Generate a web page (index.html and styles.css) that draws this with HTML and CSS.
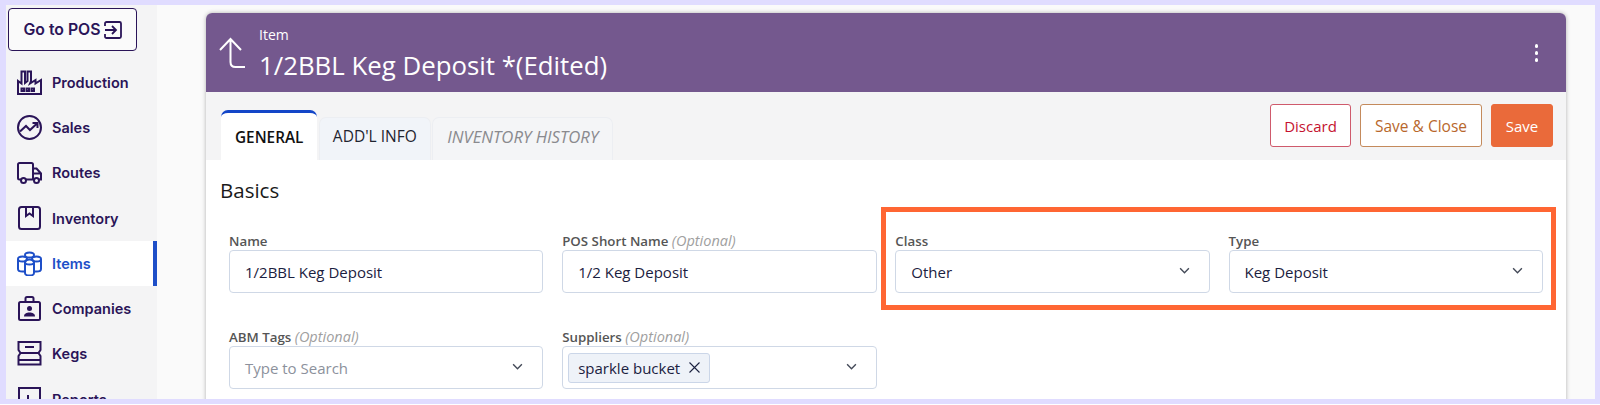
FILE: index.html
```html
<!DOCTYPE html>
<html lang="en">
<head>
  <meta charset="UTF-8">
  <title>Item - 1/2BBL Keg Deposit</title>
  <link rel="stylesheet" href="styles.css">
</head>
<body>
  <div class="frame">
    <aside class="sidebar">
      <button class="pos-button">Go to POS
        <svg class="pos-icon" viewBox="0 0 18 18"><path d="M1 5V2.500A1.500 1.500 0 0 1 2.500 1h13A1.500 1.500 0 0 1 17 2.500v13a1.500 1.500 0 0 1-1.500 1.500h-13A1.500 1.500 0 0 1 1 15.500V13M1 9h10.500M8 5l4 4-4 4"/></svg>
      </button>
      <nav class="nav">
        <a class="nav-item">
          <svg class="nav-icon" viewBox="0 0 25 25"><path d="M1 24V11l3.500 2.500V1.500h3.500V13l2.500-2V1.500H14V11l-1 2.500 5.500-3.500v3.500L24 10v14zM4.500 21v-2.500h2.500V21zM9.500 21v-2.500H12V21zM14.500 21v-2.500H17V21z"/></svg>
          Production
        </a>
        <a class="nav-item">
          <svg class="nav-icon" viewBox="0 0 25 25"><circle cx="12.500" cy="12.500" r="11.500"/><path d="M3 16.500l6-5.500 4 4 7-6.500M15.500 8h5v5"/></svg>
          Sales
        </a>
        <a class="nav-item">
          <svg class="nav-icon" viewBox="0 0 25 25"><path d="M4 19.500H2.500A1.500 1.500 0 0 1 1 18V4.500A1.500 1.500 0 0 1 2.500 3h12A1.500 1.500 0 0 1 16 4.500v15H9M16 8.500h3.500l4.500 5v6h-2M16 13.500h8"/><circle cx="6.500" cy="20.500" r="2.500"/><circle cx="19.500" cy="20.500" r="2.500"/></svg>
          Routes
        </a>
        <a class="nav-item">
          <svg class="nav-icon" viewBox="0 0 25 25"><rect x="2" y="1" width="21" height="22" rx="2.500"/><path d="M9 1v9l3.500-2.500L16 10V1"/></svg>
          Inventory
        </a>
        <a class="nav-item active">
          <svg class="nav-icon" viewBox="0 0 25 25"><ellipse cx="12.500" cy="4" rx="4.500" ry="2.500"/><ellipse cx="5.500" cy="8" rx="4.500" ry="2.500"/><ellipse cx="19.500" cy="8" rx="4.500" ry="2.500"/><ellipse cx="12.500" cy="11" rx="4.500" ry="2.500"/><path d="M1 8v10c0 1.500 2 2.500 4.500 2.500H8M24 8v10c0 1.500-2 2.500-4.500 2.500H17M8 11v11c0 1.500 2 2.500 4.500 2.500s4.500-1 4.500-2.500V11"/></svg>
          Items
        </a>
        <a class="nav-item">
          <svg class="nav-icon" viewBox="0 0 25 25"><rect x="2" y="6" width="21" height="18" rx="1.500"/><path d="M8.500 6V2.500A1.500 1.500 0 0 1 10 1h5a1.500 1.500 0 0 1 1.500 1.500V6"/><circle class="fill" cx="12.500" cy="12.500" r="2.500"/><path class="fill" d="M7 20.500c0-3 2.500-4 5.500-4s5.500 1 5.500 4z"/></svg>
          Companies
        </a>
        <a class="nav-item">
          <svg class="nav-icon" viewBox="0 0 25 25"><path d="M1.500 1h22v8l-2 3 2 3v8.500h-22V15l2-3-2-3zM3.500 12h18M1.500 19h22M8 6h9"/></svg>
          Kegs
        </a>
        <a class="nav-item">
          <svg class="nav-icon" viewBox="0 0 25 25"><rect x="2" y="1" width="21" height="23"/><path d="M11 8v8M14.500 12v4"/></svg>
          Reports
        </a>
      </nav>
    </aside>

    <main class="main">
      <section class="card">
        <header class="card-header">
          <svg class="back-icon" viewBox="0 0 26 32"><path d="M1 13L11.500 2 22 13M11.500 2v23c0 3 2 5 5 5H26"/></svg>
          <div class="card-titles">
            <div class="card-kicker">Item</div>
            <h1 class="card-title">1/2BBL Keg Deposit *(Edited)</h1>
          </div>
          <div class="kebab"><span></span><span></span><span></span></div>
        </header>

        <div class="toolbar">
          <div class="tabs">
            <div class="tab current">GENERAL</div>
            <div class="tab">ADD'L INFO</div>
            <div class="tab muted">INVENTORY HISTORY</div>
          </div>
          <div class="actions">
            <button class="btn btn-discard">Discard</button>
            <button class="btn btn-close">Save &amp; Close</button>
            <button class="btn btn-save">Save</button>
          </div>
        </div>

        <div class="card-body">
          <h2 class="section-title">Basics</h2>
          <div class="form-grid">
            <div class="field">
              <label class="field-label">Name</label>
              <input class="control" type="text" value="1/2BBL Keg Deposit">
            </div>
            <div class="field">
              <label class="field-label">POS Short Name <em>(Optional)</em></label>
              <input class="control" type="text" value="1/2 Keg Deposit">
            </div>
            <div class="field">
              <label class="field-label">Class</label>
              <div class="control select">Other
                <svg class="chevron" viewBox="0 0 12 8"><path d="M1 1.500l5 5 5-5"/></svg>
              </div>
            </div>
            <div class="field">
              <label class="field-label">Type</label>
              <div class="control select">Keg Deposit
                <svg class="chevron" viewBox="0 0 12 8"><path d="M1 1.500l5 5 5-5"/></svg>
              </div>
            </div>
            <div class="field">
              <label class="field-label">ABM Tags <em>(Optional)</em></label>
              <div class="control select placeholder">Type to Search
                <svg class="chevron" viewBox="0 0 12 8"><path d="M1 1.500l5 5 5-5"/></svg>
              </div>
            </div>
            <div class="field">
              <label class="field-label">Suppliers <em>(Optional)</em></label>
              <div class="control select has-chip">
                <span class="chip">sparkle bucket
                  <svg class="chip-x" viewBox="0 0 11 11"><path d="M.5.500l10 10M10.500.500l-10 10"/></svg>
                </span>
                <svg class="chevron" viewBox="0 0 12 8"><path d="M1 1.500l5 5 5-5"/></svg>
              </div>
            </div>
            <!-- annotation from the screenshot -->
            <div class="highlight"></div>
          </div>
        </div>
      </section>
    </main>
  </div>
</body>
</html>
```

FILE: styles.css
```css
* {
  box-sizing: border-box;
}
html, body {
  height: 405px;
  margin: 0;
  overflow: hidden;
  background: #fff;
}
body {
  font-family: 'Open Sans', sans-serif;
  color: #1b2140;
}
.frame {
  display: flex;
  height: 404px;
  border: solid #e0dcff;
  border-width: 5px 5px 5px 6px;
  overflow: hidden;
}

/* sidebar */
.sidebar {
  width: 151px;
  flex: none;
  background: #f4f4f5;
  padding: 3px 0 0 2px;
  font-family: Inter, sans-serif;
  color: #2a1458;
}
.pos-button {
  display: flex;
  align-items: center;
  justify-content: center;
  gap: 3px;
  width: 129px;
  height: 43px;
  padding: 0;
  background: #fafafa;
  border: 1px solid #2a1458;
  border-radius: 4px;
  color: #2a1458;
  font: 600 15.8px Inter, sans-serif;
}
.pos-icon {
  width: 18px;
  height: 18px;
  fill: none;
  stroke: #2a1458;
  stroke-width: 1.8;
}
.nav {
  margin: 8.5px 0 0 -2px;
}
.nav-item {
  display: flex;
  align-items: center;
  gap: 10px;
  height: 45.3px;
  padding-left: 11px;
  font-size: 14.5px;
  font-weight: 600;
}
.nav-icon {
  width: 25px;
  height: 25px;
  flex: none;
  fill: none;
  stroke: currentColor;
  stroke-width: 2;
}
.nav-icon .fill {
  fill: currentColor;
  stroke: none;
}
.nav-item.active {
  background: #fff;
  color: #1e4fc8;
  border-right: 4px solid #1e4fc8;
}

/* main area */
.main {
  flex: 1;
  background: #fafafa;
  padding: 8px 29px 0 49px;
}
.card {
  height: 500px;
  background: #fff;
  border-radius: 6px 6px 0 0;
  box-shadow: 0 0 4px rgba(0, 0, 0, 0.3);
}
.card-header {
  display: flex;
  align-items: center;
  height: 79px;
  padding: 0 28px 0 13px;
  background: #74588e;
  border-radius: 6px 6px 0 0;
  color: #fff;
}
.back-icon {
  width: 26px;
  height: 32px;
  margin: 1px 14px 0 0;
  fill: none;
  stroke: #fff;
  stroke-width: 2;
}
.card-titles {
  flex: 1;
  padding-top: 2px;
}
.card-kicker {
  margin-bottom: 4px;
  font-size: 14px;
  line-height: 19px;
}
.card-title {
  margin: 0;
  font-size: 25.8px;
  font-weight: 400;
  line-height: 34px;
}
.kebab {
  display: flex;
  flex-direction: column;
  gap: 3.5px;
  margin-top: 1px;
}
.kebab span {
  width: 3.5px;
  height: 3.5px;
  background: #fff;
  border-radius: 50%;
}

.toolbar {
  display: flex;
  justify-content: space-between;
  height: 68px;
  padding: 0 13px 0 15px;
  background: #f4f4f5;
}
.tabs {
  display: flex;
  align-items: flex-end;
  gap: 1.5px;
}
.tab {
  height: 43px;
  padding: 0 13px;
  background: #f1f4f9;
  border: 1px solid #eceef2;
  border-bottom: none;
  border-radius: 7px 7px 0 0;
  font-size: 15.5px;
  line-height: 37px;
  color: #1f2430;
}
.tab.current {
  height: 50px;
  padding: 3px 14px 0;
  background: #fff;
  border: none;
  border-top: 3px solid #1346c8;
  font-size: 15.3px;
  font-weight: 600;
  line-height: 42px;
  color: #111;
}
.tab.muted {
  padding: 0 14px;
  background: #f4f5f7;
  color: #8a8a8e;
  font-size: 16.7px;
  font-style: italic;
}
.actions {
  display: flex;
  gap: 9px;
  padding-top: 12px;
}
.btn {
  height: 43px;
  padding: 0;
  border: 1px solid;
  border-radius: 3px;
  background: #fff;
  font: 15px 'Open Sans', sans-serif;
}
.btn-discard {
  width: 81px;
  color: #c4122f;
  border-color: #cf5a6c;
}
.btn-close {
  width: 122px;
  color: #b8672c;
  border-color: #c48a5c;
  font-size: 15.5px;
}
.btn-save {
  width: 62px;
  color: #fff;
  background: #ea6a3a;
  border-color: #ea6a3a;
}

/* form */
.card-body {
  padding: 17px 23px 0 14px;
}
.section-title {
  margin: 0;
  font-size: 20.5px;
  font-weight: 400;
  line-height: 27px;
  color: #1a1a1a;
}
.form-grid {
  position: relative;
  display: grid;
  grid-template-columns: repeat(4, 1fr);
  column-gap: 18.7px;
  row-gap: 37px;
  margin: 30px 0 0 9px;
}
.field-label {
  display: block;
  height: 16px;
  font-size: 13.3px;
  font-weight: 600;
  line-height: 14px;
  color: #555;
}
.field-label em {
  color: #a0a0a0;
  font-size: 14.5px;
  font-weight: 400;
}
.control {
  display: block;
  width: 100%;
  height: 43px;
  padding: 0 15px;
  border: 1px solid #cfd8e6;
  border-radius: 4px;
  background: #fff;
  font: 15px 'Open Sans', sans-serif;
  color: #1b2140;
}
.select {
  display: flex;
  align-items: center;
  justify-content: space-between;
  padding-right: 19px;
}
.has-chip {
  padding-left: 5px;
}
.placeholder {
  color: #8c919c;
}
.chevron {
  width: 11px;
  height: 7px;
  margin-top: -2px;
  fill: none;
  stroke: #444a58;
  stroke-width: 1.6;
}
.chip {
  display: flex;
  align-items: center;
  gap: 9px;
  height: 30px;
  padding: 0 9px;
  background: #eef2f8;
  border: 1px solid #cbd6e8;
  border-radius: 3px;
}
.chip-x {
  width: 11px;
  height: 11px;
  fill: none;
  stroke: #1b2140;
  stroke-width: 1.1;
}
.highlight {
  position: absolute;
  top: -27px;
  left: 652px;
  width: 675px;
  height: 103px;
  border: 5px solid #ff6633;
}
```
